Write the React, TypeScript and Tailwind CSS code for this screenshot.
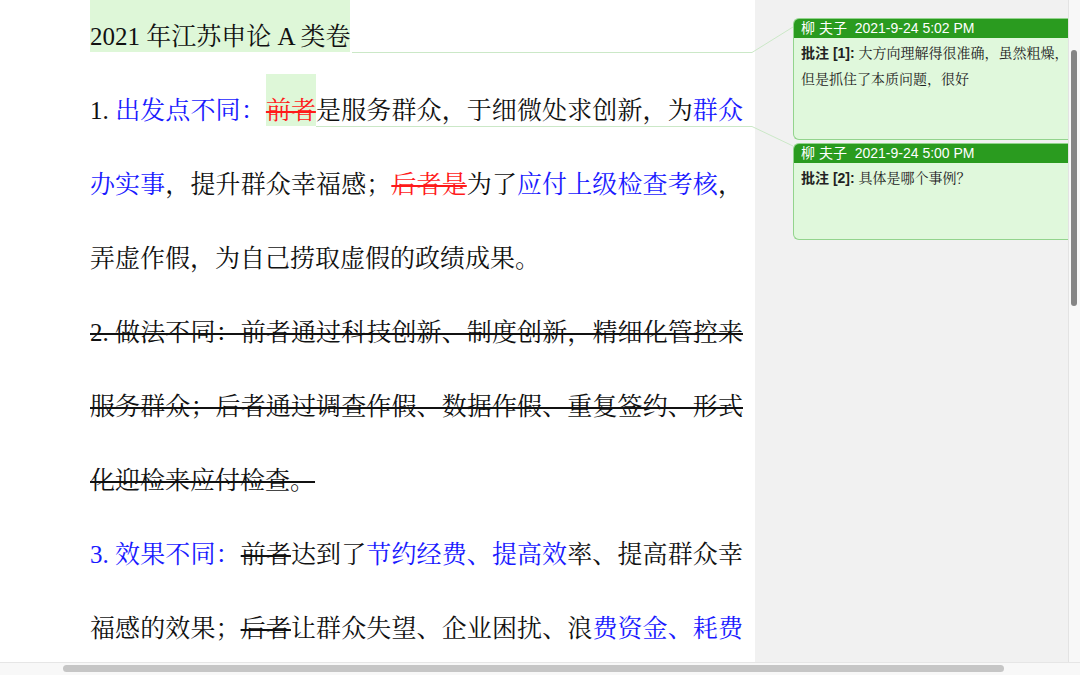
import React from "react";

const serif = {
  fontFamily:
    '"Liberation Serif", "Noto Serif CJK SC", "Noto Sans CJK SC", serif',
};
const sans = {
  fontFamily: '"Liberation Sans", "Noto Sans CJK SC", sans-serif',
};

const B = ({ children }: { children: React.ReactNode }) => (
  <span className="text-[#1a1aff]">{children}</span>
);
const S = ({ children, red }: { children: React.ReactNode; red?: boolean }) => (
  <span
    className={
      "line-through decoration-[1.5px] " + (red ? "text-[#ff1a1a]" : "")
    }
  >
    {children}
  </span>
);
const Mark = ({ children }: { children: React.ReactNode }) => (
  <span className="inline-block h-[52px] bg-[#def7d8]">{children}</span>
);

const Line = ({
  children,
  full = true,
}: {
  children: React.ReactNode;
  full?: boolean;
}) => (
  <div
    className={
      "h-[74px] leading-[74px] " +
      (full ? "text-justify [text-align-last:justify]" : "text-left")
    }
  >
    {children}
  </div>
);

const comments = [
  {
    head: "柳 夫子  2021-9-24 5:02 PM",
    tag: "批注 [1]:",
    body: ["大方向理解得很准确，虽然粗燥，", "但是抓住了本质问题，很好"],
    h: "h-[122px]",
  },
  {
    head: "柳 夫子  2021-9-24 5:00 PM",
    tag: "批注 [2]:",
    body: ["具体是哪个事例？"],
    h: "h-[97px]",
  },
];

export default function App() {
  return (
    <div className="relative flex h-[675px] w-[1080px] flex-col overflow-hidden bg-white">
      <div className="flex h-[662px]">
        {/* document page */}
        <div
          className="h-full w-[755px] overflow-hidden bg-white pl-[90px] pr-[12px] text-[25px] text-[#111]"
          style={serif}
        >
          <div className="w-[653px]">
            <Line full={false}>
              <Mark>2021 年江苏申论 A 类卷</Mark>
            </Line>
            <Line>
              1. <B>出发点不同：</B>
              <Mark>
                <S red>前者</S>
              </Mark>
              是服务群众，于细微处求创新，为<B>群众</B>
            </Line>
            <Line>
              <B>办实事</B>，提升群众幸福感；<S red>后者是</S>为了
              <B>应付上级检查考核</B>，
            </Line>
            <Line full={false}>弄虚作假，为自己捞取虚假的政绩成果。</Line>
            <Line>
              <S>2. 做法不同：前者通过科技创新、制度创新，精细化管控来</S>
            </Line>
            <Line>
              <S>服务群众；后者通过调查作假、数据作假、重复签约、形式</S>
            </Line>
            <Line full={false}>
              <S>化迎检来应付检查。</S>
            </Line>
            <Line>
              <B>3. 效果不同：</B>
              <S>前者</S>达到了<B>节约经费、提高效</B>率、提高群众幸
            </Line>
            <Line>
              福感的效果；<S>后者</S>让群众失望、企业困扰、浪
              <B>费资金、耗费</B>
            </Line>
          </div>
        </div>

        {/* comment margin */}
        <div className="flex h-full w-[313px] flex-col gap-[3px] bg-[#f1f1f1] pl-[38px] pt-[18px]">
          {comments.map((c, i) => (
            <div
              key={i}
              className={
                "flex flex-col overflow-hidden rounded-l-[6px] border border-r-0 border-[#93d48d] bg-[#e0f8dc] " +
                c.h
              }
            >
              <div
                className="h-[19px] whitespace-pre bg-[#2a9b1f] pl-[7px] text-[14px] leading-[19px] text-white"
                style={sans}
              >
                {c.head}
              </div>
              <div
                className="pl-[7px] pt-[2px] text-[14px] leading-[26px] text-[#222]"
                style={serif}
              >
                {c.body.map((t, j) => (
                  <div key={j} className="whitespace-nowrap">
                    {j === 0 && (
                      <span className="font-bold" style={sans}>
                        {c.tag}{" "}
                      </span>
                    )}
                    {t}
                  </div>
                ))}
              </div>
            </div>
          ))}
        </div>

        {/* vertical scrollbar */}
        <div className="h-full w-[12px] border-l border-[#e3e3e3] bg-[#f8f8f8]">
          <div className="ml-[2px] mt-[50px] h-[256px] w-[6px] rounded-full bg-[#858585]" />
        </div>
      </div>

      {/* horizontal scrollbar */}
      <div className="h-[13px] border-t border-[#e6e6e6] bg-[#f8f8f8]">
        <div className="ml-[63px] mt-[2px] h-[7px] w-[941px] rounded-full bg-[#c6c6c6]" />
      </div>

      {/* comment connector lines */}
      <svg
        className="pointer-events-none absolute left-0 top-0"
        width="1080"
        height="675"
      >
        <polyline
          points="352,52.5 752,52.5 793,27"
          fill="none"
          stroke="#cbe8c7"
          strokeWidth="1"
        />
        <polyline
          points="316,126.5 752,126.5 793,146"
          fill="none"
          stroke="#cbe8c7"
          strokeWidth="1"
        />
      </svg>
    </div>
  );
}
